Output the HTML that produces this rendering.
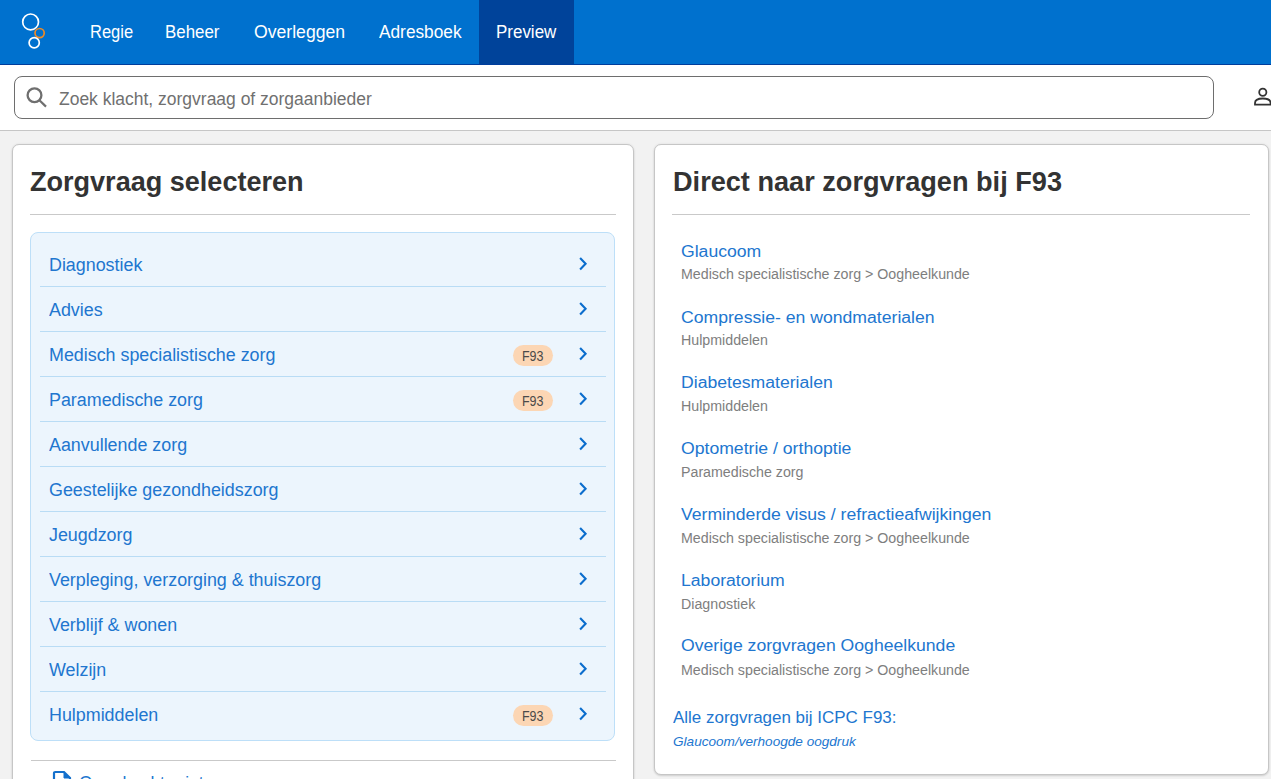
<!DOCTYPE html>
<html><head><meta charset="utf-8">
<style>
*{box-sizing:border-box;margin:0;padding:0}
html,body{width:1271px;height:779px;overflow:hidden}
body{background:#f2f2f2;font-family:"Liberation Sans",sans-serif;position:relative}
.b{position:absolute}
.tx{position:absolute;line-height:0;white-space:nowrap;transform-origin:0 0;z-index:5}
.sep{position:absolute;left:40px;width:566px;height:1px;background:#b9dcf5}
.chev{position:absolute;left:577px;z-index:4}
.badge{position:absolute;left:513px;width:40px;height:21px;border-radius:10.5px;background:#fcd6b4;z-index:4}
</style></head><body>
<div class="b" style="left:0;top:0;width:1271px;height:64px;background:#0071ce"></div>
<div class="b" style="left:0;top:64px;width:1271px;height:1px;background:#003d9c"></div>
<div class="b" style="left:479px;top:0;width:95px;height:64px;background:#00439a"></div>
<svg class="b" style="left:0;top:0" width="70" height="64" viewBox="0 0 70 64">
  <circle cx="30.6" cy="21.9" r="7.9" fill="none" stroke="#fff" stroke-width="1.7"/>
  <circle cx="39.6" cy="33.1" r="4.6" fill="none" stroke="#f08a24" stroke-width="1.7"/>
  <circle cx="34.2" cy="42.8" r="5.1" fill="none" stroke="#fff" stroke-width="1.7"/>
</svg>
<div class="b" style="left:0;top:65px;width:1271px;height:65px;background:#fff"></div>
<div class="b" style="left:0;top:130px;width:1271px;height:1px;background:#c6c6c6"></div>
<div class="b" style="left:14px;top:76px;width:1200px;height:43px;border:1px solid #6e6e6e;border-radius:8px"></div>
<svg class="b" style="left:20px;top:80px" width="34" height="34" viewBox="0 0 34 34">
  <circle cx="14.5" cy="15.3" r="6.9" fill="none" stroke="#6f6f6f" stroke-width="2.3"/>
  <line x1="19.4" y1="20.2" x2="26" y2="26.6" stroke="#6f6f6f" stroke-width="2.2"/>
</svg>
<svg class="b" style="left:1240px;top:80px" width="31" height="31" viewBox="0 0 31 31">
  <circle cx="22.8" cy="12.3" r="3.6" fill="none" stroke="#333" stroke-width="1.8"/>
  <path d="M15 24.7 v-1.6 q0-4.6 7.8-4.6 q7.8 0 7.8 4.6 v1.6 z" fill="none" stroke="#333" stroke-width="1.8"/>
</svg>

<div class="b" style="left:12px;top:144px;width:622px;height:700px;background:#fff;border:1px solid #c6c6c6;border-radius:7px;box-shadow:0 0 3px rgba(0,0,0,.07),0 1px 2px rgba(0,0,0,.12)"></div>
<div class="b" style="left:30px;top:214px;width:586px;height:1px;background:#c9c9c9"></div>
<div class="b" style="left:30px;top:232px;width:585px;height:509px;background:#ecf5fd;border:1px solid #bddff8;border-radius:8px"></div>
<div class="sep" style="top:286px"></div>
<div class="sep" style="top:331px"></div>
<div class="sep" style="top:376px"></div>
<div class="sep" style="top:421px"></div>
<div class="sep" style="top:466px"></div>
<div class="sep" style="top:511px"></div>
<div class="sep" style="top:556px"></div>
<div class="sep" style="top:601px"></div>
<div class="sep" style="top:646px"></div>
<div class="sep" style="top:691px"></div>
<svg class="chev" style="top:254px" width="14" height="20" viewBox="0 0 14 20"><path d="M3.1 4.1 L8.6 9.85 L3.1 15.6" fill="none" stroke="#0b6dcd" stroke-width="2.1"/></svg>
<svg class="chev" style="top:299px" width="14" height="20" viewBox="0 0 14 20"><path d="M3.1 4.1 L8.6 9.85 L3.1 15.6" fill="none" stroke="#0b6dcd" stroke-width="2.1"/></svg>
<svg class="chev" style="top:344px" width="14" height="20" viewBox="0 0 14 20"><path d="M3.1 4.1 L8.6 9.85 L3.1 15.6" fill="none" stroke="#0b6dcd" stroke-width="2.1"/></svg>
<svg class="chev" style="top:389px" width="14" height="20" viewBox="0 0 14 20"><path d="M3.1 4.1 L8.6 9.85 L3.1 15.6" fill="none" stroke="#0b6dcd" stroke-width="2.1"/></svg>
<svg class="chev" style="top:434px" width="14" height="20" viewBox="0 0 14 20"><path d="M3.1 4.1 L8.6 9.85 L3.1 15.6" fill="none" stroke="#0b6dcd" stroke-width="2.1"/></svg>
<svg class="chev" style="top:479px" width="14" height="20" viewBox="0 0 14 20"><path d="M3.1 4.1 L8.6 9.85 L3.1 15.6" fill="none" stroke="#0b6dcd" stroke-width="2.1"/></svg>
<svg class="chev" style="top:524px" width="14" height="20" viewBox="0 0 14 20"><path d="M3.1 4.1 L8.6 9.85 L3.1 15.6" fill="none" stroke="#0b6dcd" stroke-width="2.1"/></svg>
<svg class="chev" style="top:569px" width="14" height="20" viewBox="0 0 14 20"><path d="M3.1 4.1 L8.6 9.85 L3.1 15.6" fill="none" stroke="#0b6dcd" stroke-width="2.1"/></svg>
<svg class="chev" style="top:614px" width="14" height="20" viewBox="0 0 14 20"><path d="M3.1 4.1 L8.6 9.85 L3.1 15.6" fill="none" stroke="#0b6dcd" stroke-width="2.1"/></svg>
<svg class="chev" style="top:659px" width="14" height="20" viewBox="0 0 14 20"><path d="M3.1 4.1 L8.6 9.85 L3.1 15.6" fill="none" stroke="#0b6dcd" stroke-width="2.1"/></svg>
<svg class="chev" style="top:704px" width="14" height="20" viewBox="0 0 14 20"><path d="M3.1 4.1 L8.6 9.85 L3.1 15.6" fill="none" stroke="#0b6dcd" stroke-width="2.1"/></svg>
<div class="badge" style="top:345px"></div>
<div class="badge" style="top:390px"></div>
<div class="badge" style="top:705px"></div>
<div class="b" style="left:31px;top:760px;width:585px;height:1px;background:#c9c9c9"></div>
<svg class="b" style="left:50px;top:769px" width="24" height="12" viewBox="0 0 24 12">
  <path d="M4 11 V4.2 a1.2 1.2 0 0 1 1.2 -1.2 H14 L20 9 V12" fill="none" stroke="#1470cc" stroke-width="2.2"/>
  <path d="M14 3 V9 H20" fill="#1470cc" stroke="#1470cc" stroke-width="1"/>
</svg>

<div class="b" style="left:654px;top:144px;width:615px;height:631px;background:#fff;border:1px solid #c6c6c6;border-radius:7px;box-shadow:0 0 3px rgba(0,0,0,.07),0 1px 2px rgba(0,0,0,.12)"></div>
<div class="b" style="left:672px;top:214px;width:578px;height:1px;background:#c9c9c9"></div>
<div class="tx" style="left:89.76px;top:32.00px;font-size:17.5px;font-weight:400;font-style:normal;color:#fff;transform:scaleX(0.9432)">Regie</div>
<div class="tx" style="left:165.03px;top:32.00px;font-size:17.5px;font-weight:400;font-style:normal;color:#fff;transform:scaleX(0.9655)">Beheer</div>
<div class="tx" style="left:253.69px;top:32.00px;font-size:17.5px;font-weight:400;font-style:normal;color:#fff;transform:scaleX(1.0067)">Overleggen</div>
<div class="tx" style="left:378.60px;top:32.00px;font-size:17.5px;font-weight:400;font-style:normal;color:#fff;transform:scaleX(0.9869)">Adresboek</div>
<div class="tx" style="left:496.43px;top:32.00px;font-size:17.5px;font-weight:400;font-style:normal;color:#fff;transform:scaleX(0.9689)">Preview</div>
<div class="tx" style="left:59.10px;top:99.00px;font-size:17.5px;font-weight:400;font-style:normal;color:#707070;transform:scaleX(0.9987)">Zoek klacht, zorgvraag of zorgaanbieder</div>
<div class="tx" style="left:29.63px;top:182.00px;font-size:28px;font-weight:700;font-style:normal;color:#333;transform:scaleX(0.9658)">Zorgvraag selecteren</div>
<div class="tx" style="left:672.96px;top:182.00px;font-size:28px;font-weight:700;font-style:normal;color:#333;transform:scaleX(0.9689)">Direct naar zorgvragen bij F93</div>
<div class="tx" style="left:49.21px;top:265.00px;font-size:18px;font-weight:400;font-style:normal;color:#2176cf;transform:scaleX(0.9927)">Diagnostiek</div>
<div class="tx" style="left:49.21px;top:310.00px;font-size:18px;font-weight:400;font-style:normal;color:#2176cf;transform:scaleX(0.9927)">Advies</div>
<div class="tx" style="left:49.21px;top:355.00px;font-size:18px;font-weight:400;font-style:normal;color:#2176cf;transform:scaleX(0.9927)">Medisch specialistische zorg</div>
<div class="tx" style="left:49.21px;top:400.00px;font-size:18px;font-weight:400;font-style:normal;color:#2176cf;transform:scaleX(0.9927)">Paramedische zorg</div>
<div class="tx" style="left:49.21px;top:445.00px;font-size:18px;font-weight:400;font-style:normal;color:#2176cf;transform:scaleX(0.9927)">Aanvullende zorg</div>
<div class="tx" style="left:49.21px;top:490.00px;font-size:18px;font-weight:400;font-style:normal;color:#2176cf;transform:scaleX(0.9927)">Geestelijke gezondheidszorg</div>
<div class="tx" style="left:49.21px;top:535.00px;font-size:18px;font-weight:400;font-style:normal;color:#2176cf;transform:scaleX(0.9927)">Jeugdzorg</div>
<div class="tx" style="left:49.21px;top:580.00px;font-size:18px;font-weight:400;font-style:normal;color:#2176cf;transform:scaleX(0.9927)">Verpleging, verzorging &amp; thuiszorg</div>
<div class="tx" style="left:49.21px;top:625.00px;font-size:18px;font-weight:400;font-style:normal;color:#2176cf;transform:scaleX(0.9927)">Verblijf &amp; wonen</div>
<div class="tx" style="left:49.21px;top:670.00px;font-size:18px;font-weight:400;font-style:normal;color:#2176cf;transform:scaleX(0.9927)">Welzijn</div>
<div class="tx" style="left:49.21px;top:715.00px;font-size:18px;font-weight:400;font-style:normal;color:#2176cf;transform:scaleX(0.9927)">Hulpmiddelen</div>
<div class="tx" style="left:681.40px;top:251.00px;font-size:17.3px;font-weight:400;font-style:normal;color:#2176cf;transform:scaleX(1.0194)">Glaucoom</div>
<div class="tx" style="left:680.98px;top:274.00px;font-size:14px;font-weight:400;font-style:normal;color:#7e7e7e;transform:scaleX(1.0152)">Medisch specialistische zorg &gt; Oogheelkunde</div>
<div class="tx" style="left:681.40px;top:316.70px;font-size:17.3px;font-weight:400;font-style:normal;color:#2176cf;transform:scaleX(1.0194)">Compressie- en wondmaterialen</div>
<div class="tx" style="left:680.98px;top:340.00px;font-size:14px;font-weight:400;font-style:normal;color:#7e7e7e;transform:scaleX(1.0152)">Hulpmiddelen</div>
<div class="tx" style="left:681.40px;top:382.40px;font-size:17.3px;font-weight:400;font-style:normal;color:#2176cf;transform:scaleX(1.0194)">Diabetesmaterialen</div>
<div class="tx" style="left:680.98px;top:406.00px;font-size:14px;font-weight:400;font-style:normal;color:#7e7e7e;transform:scaleX(1.0152)">Hulpmiddelen</div>
<div class="tx" style="left:681.40px;top:448.10px;font-size:17.3px;font-weight:400;font-style:normal;color:#2176cf;transform:scaleX(1.0194)">Optometrie / orthoptie</div>
<div class="tx" style="left:680.98px;top:472.00px;font-size:14px;font-weight:400;font-style:normal;color:#7e7e7e;transform:scaleX(1.0152)">Paramedische zorg</div>
<div class="tx" style="left:681.40px;top:513.80px;font-size:17.3px;font-weight:400;font-style:normal;color:#2176cf;transform:scaleX(1.0194)">Verminderde visus / refractieafwijkingen</div>
<div class="tx" style="left:680.98px;top:538.00px;font-size:14px;font-weight:400;font-style:normal;color:#7e7e7e;transform:scaleX(1.0152)">Medisch specialistische zorg &gt; Oogheelkunde</div>
<div class="tx" style="left:681.40px;top:579.50px;font-size:17.3px;font-weight:400;font-style:normal;color:#2176cf;transform:scaleX(1.0194)">Laboratorium</div>
<div class="tx" style="left:680.98px;top:604.00px;font-size:14px;font-weight:400;font-style:normal;color:#7e7e7e;transform:scaleX(1.0152)">Diagnostiek</div>
<div class="tx" style="left:681.40px;top:645.20px;font-size:17.3px;font-weight:400;font-style:normal;color:#2176cf;transform:scaleX(1.0194)">Overige zorgvragen Oogheelkunde</div>
<div class="tx" style="left:680.98px;top:670.00px;font-size:14px;font-weight:400;font-style:normal;color:#7e7e7e;transform:scaleX(1.0152)">Medisch specialistische zorg &gt; Oogheelkunde</div>
<div class="tx" style="left:672.90px;top:717.00px;font-size:17.2px;font-weight:400;font-style:normal;color:#2176cf;transform:scaleX(0.9871)">Alle zorgvragen bij ICPC F93:</div>
<div class="tx" style="left:673.00px;top:742.30px;font-size:13.4px;font-weight:400;font-style:italic;color:#2176cf;transform:scaleX(1.0144)">Glaucoom/verhoogde oogdruk</div>
<div class="tx" style="left:521.81px;top:356.00px;font-size:14px;font-weight:400;font-style:normal;color:#4a4a4a;transform:scaleX(0.8913)">F93</div>
<div class="tx" style="left:521.81px;top:401.00px;font-size:14px;font-weight:400;font-style:normal;color:#4a4a4a;transform:scaleX(0.8913)">F93</div>
<div class="tx" style="left:521.81px;top:716.00px;font-size:14px;font-weight:400;font-style:normal;color:#4a4a4a;transform:scaleX(0.8913)">F93</div>
<div class="tx" style="left:79.33px;top:783.00px;font-size:18px;font-weight:400;font-style:normal;color:#2176cf;transform:scaleX(0.9650)">Overdracht printen</div>
</body></html>
